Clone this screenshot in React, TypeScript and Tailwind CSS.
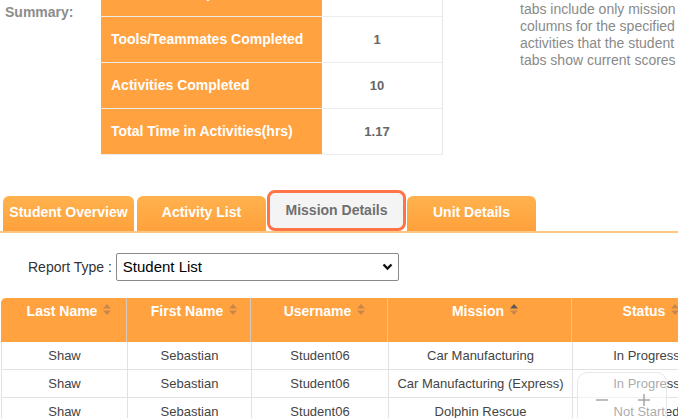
import React from 'react';

const summaryRows = [
  { label: 'Missions Completed', value: '2' },
  { label: 'Tools/Teammates Completed', value: '1' },
  { label: 'Activities Completed', value: '10' },
  { label: 'Total Time in Activities(hrs)', value: '1.17' },
];

const columns = [
  { title: 'Last Name', width: 'w-[125px]', sort: 'none' },
  { title: 'First Name', width: 'w-[124px]', sort: 'none' },
  { title: 'Username', width: 'w-[137px]', sort: 'none' },
  { title: 'Mission', width: 'w-[184px]', sort: 'asc' },
  { title: 'Status', width: 'w-[148px]', sort: 'none' },
];

const rows = [
  ['Shaw', 'Sebastian', 'Student06', 'Car Manufacturing', 'In Progress'],
  ['Shaw', 'Sebastian', 'Student06', 'Car Manufacturing (Express)', 'In Progress'],
  ['Shaw', 'Sebastian', 'Student06', 'Dolphin Rescue', 'Not Started'],
];

const SortIcon: React.FC<{ dir: string }> = ({ dir }) => (
  <svg width="8" height="11" viewBox="0 0 8 11" className="ml-[6px] mt-[3px] shrink-0">
    <polygon points="4,0 8,4.5 0,4.5" fill={dir === 'asc' ? '#5a5a5a' : '#c9874a'} />
    <polygon points="0,6.5 8,6.5 4,11" fill="#c9874a" />
  </svg>
);

const App: React.FC = () => {
  return (
    <div className="relative w-[678px] h-[418px] overflow-hidden bg-white font-['Liberation_Sans',Arial,sans-serif]">
      {/* Summary */}
      <div className="flex mt-[-29px]">
        <div className="w-[101px] shrink-0 pl-[5px] pt-[33px] text-[14px] leading-[16px] font-bold text-[#8c8c8c]">Summary:</div>
        <div className="w-[342px] shrink-0 border-r border-[#e6e6e6]">
          {summaryRows.map((r) => (
            <div key={r.label} className="flex h-[46px] border-b border-[#ececec]">
              <div className="w-[221px] shrink-0 bg-[#ffa23f] px-[10px] flex items-center text-[14px] font-bold text-white">{r.label}</div>
              <div className="flex-1 flex items-center justify-center pr-[10px] text-[13px] font-bold text-[#666]">{r.value}</div>
            </div>
          ))}
        </div>
        <div className="ml-[77px] shrink-0 pt-[13px] text-[14px] leading-[17px] text-[#8a8a8a] whitespace-nowrap">
          <div>grades. The Mission and Unit Details</div>
          <div>tabs include only mission</div>
          <div>columns for the specified</div>
          <div>activities that the student</div>
          <div>tabs show current scores</div>
        </div>
      </div>

      {/* Tabs */}
      <div className="mt-[35px] flex items-end h-[41px] pl-[3px] text-[14px] font-bold">
        <div className="w-[131px] h-[35px] pb-[2px] rounded-t-[6px] bg-gradient-to-b from-[#ffb24e] to-[#ffa13c] text-white flex items-center justify-center whitespace-nowrap">Student Overview</div>
        <div className="ml-[3px] w-[129px] h-[35px] pb-[2px] rounded-t-[6px] bg-gradient-to-b from-[#ffb24e] to-[#ffa13c] text-white flex items-center justify-center">Activity List</div>
        <div className="ml-[1px] w-[139px] h-[41px] rounded-[8px] border-[3px] border-[#ff7447] bg-[#f4f4f4] text-[#6f6f6f] flex items-center justify-center">Mission Details</div>
        <div className="ml-[1px] w-[129px] h-[35px] pb-[2px] rounded-t-[6px] bg-gradient-to-b from-[#ffb24e] to-[#ffa13c] text-white flex items-center justify-center">Unit Details</div>
      </div>
      <div className="h-[2px] bg-[#ffc681]" />

      {/* Report type */}
      <div className="mt-[20px] flex items-center pl-[28px]">
        <span className="text-[14px] text-[#333]">Report Type :</span>
        <div className="ml-[4px] w-[283px] h-[28px] border border-[#8a8a8a] rounded-[2px] flex items-center justify-between pl-[6px] pr-[5px] text-[15px] text-black">
          <span>Student List</span>
          <svg width="11" height="8" viewBox="0 0 11 8">
            <polyline points="1.5,1.5 5.5,5.5 9.5,1.5" fill="none" stroke="#111" strokeWidth="2.4" />
          </svg>
        </div>
      </div>

      {/* Table */}
      <div className="mt-[17px] ml-[1px] w-[718px]">
        <div className="flex h-[44px] bg-[#ffa23f] rounded-tl-[5px]">
          {columns.map((c, i) => (
            <div key={c.title} className={`${c.width} shrink-0 ${i > 0 ? 'border-l border-[#d6c9bb]' : ''} flex justify-center pt-[3px] pl-[11px] text-[14px] font-bold text-white`}>
              <span>{c.title}</span>
              <SortIcon dir={c.sort} />
            </div>
          ))}
        </div>
        {rows.map((r, ri) => (
          <div key={ri} className="flex h-[28px] border-b border-[#e2e2e2] border-l">
            {r.map((cell, ci) => (
              <div key={ci} className={`${columns[ci].width} shrink-0 ${ci > 0 ? 'border-l border-[#e2e2e2]' : ''} flex items-center justify-center text-[13px] text-[#444] whitespace-nowrap`}>
                {cell}
              </div>
            ))}
          </div>
        ))}
      </div>

      {/* Zoom control overlay */}
      <div className="absolute left-[577px] top-[372px] w-[90px] h-[60px] rounded-[10px] border border-[#e8e8e8] bg-white/55 flex items-start gap-[28px] pt-[20px] pl-[17px]">
        <svg width="14" height="14" viewBox="0 0 14 14">
          <line x1="1" y1="7" x2="13" y2="7" stroke="#9a9a9a" strokeWidth="1.3" />
        </svg>
        <svg width="14" height="14" viewBox="0 0 14 14">
          <line x1="1" y1="7" x2="13" y2="7" stroke="#9a9a9a" strokeWidth="1.3" />
          <line x1="7" y1="1" x2="7" y2="13" stroke="#9a9a9a" strokeWidth="1.3" />
        </svg>
      </div>
    </div>
  );
};

export default App;
